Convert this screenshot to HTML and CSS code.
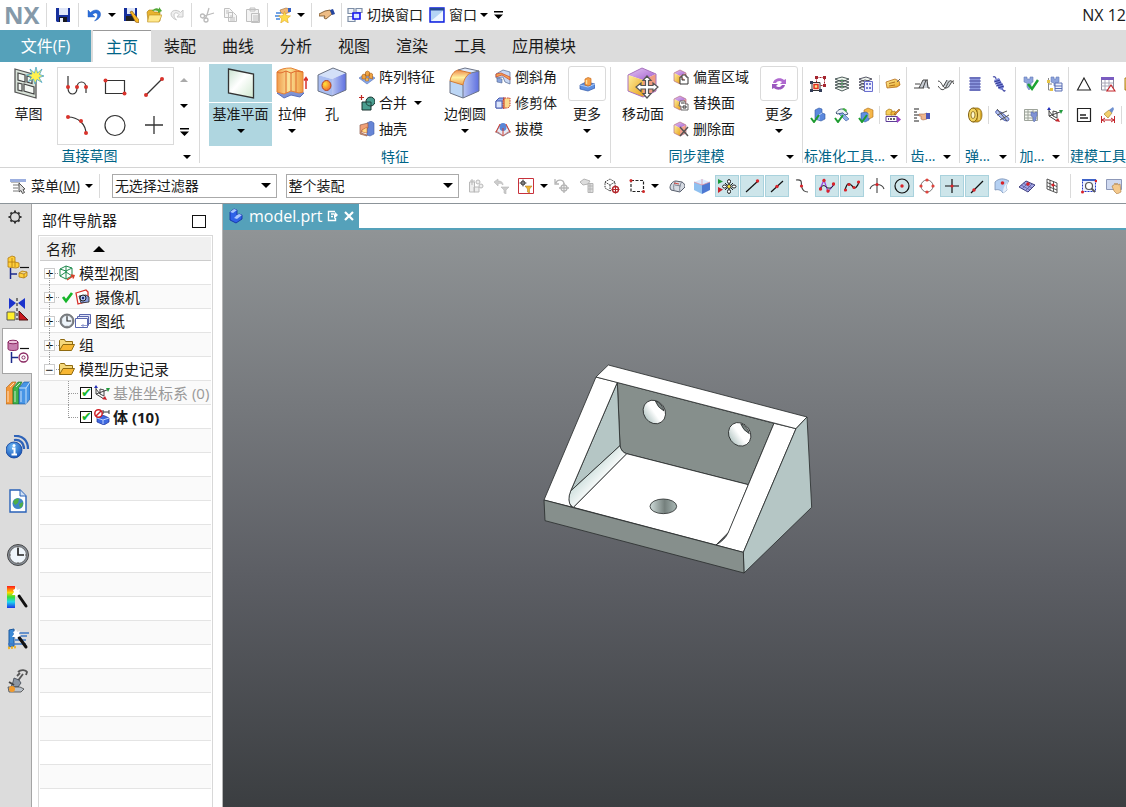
FILE: index.html
```html
<!DOCTYPE html>
<html lang="zh-CN">
  <head>
    <meta charset="UTF-8" />
    <meta name="viewport" content="width=device-width, initial-scale=1.0" />
    <title>NX 12</title>
    <link rel="stylesheet" href="styles.css">
  </head>

  <body>
    <!-- icon sprite -->
    <svg class="sprite" aria-hidden="true">
      <defs>
        <linearGradient id="gBlue" x1="0" y1="0" x2="1" y2="1"><stop offset="0" stop-color="#cfe0fb"/><stop offset="1" stop-color="#5b78d8"/></linearGradient>
        <linearGradient id="gBlueH"><stop offset="0" stop-color="#b9c6f2"/><stop offset="1" stop-color="#5d6fe0"/></linearGradient>
        <linearGradient id="gGold" x1="0" y1="0" x2="1" y2="1"><stop offset="0" stop-color="#fff0a0"/><stop offset="1" stop-color="#e8a21c"/></linearGradient>
        <linearGradient id="gOrange"><stop offset="0" stop-color="#f0994a"/><stop offset=".45" stop-color="#fbe49a"/><stop offset="1" stop-color="#ef9b3f"/></linearGradient>
        <linearGradient id="gSheet" x1="0" y1="0" x2="1" y2="1"><stop offset="0" stop-color="#c9e2cf"/><stop offset=".45" stop-color="#fff"/><stop offset="1" stop-color="#cfe8cf"/></linearGradient>
        <linearGradient id="gPurple" x1="0" y1="0" x2="1" y2="1"><stop offset="0" stop-color="#e4c6f3"/><stop offset="1" stop-color="#a45fcf"/></linearGradient>
        <linearGradient id="gFillet" x1="0" y1="0" x2="0" y2="1"><stop offset="0" stop-color="#f08a4c"/><stop offset=".5" stop-color="#fff0a0"/><stop offset="1" stop-color="#f0a050"/></linearGradient>
        <linearGradient id="gRainbow" x1="0" y1="0" x2="0" y2="1"><stop offset="0" stop-color="#ff1a1a"/><stop offset=".3" stop-color="#ffd800"/><stop offset=".5" stop-color="#35e035"/><stop offset=".72" stop-color="#20d8ee"/><stop offset="1" stop-color="#1a35e8"/></linearGradient>
        <radialGradient id="gInfo" cx=".4" cy=".3" r=".8"><stop offset="0" stop-color="#6fb8f5"/><stop offset="1" stop-color="#0b49b0"/></radialGradient>
        <radialGradient id="gHole" cx=".35" cy=".35" r=".8"><stop offset="0" stop-color="#ffe23a"/><stop offset="1" stop-color="#f2592a"/></radialGradient>
        <linearGradient id="gFace" x1="0" y1="0" x2="1" y2="1"><stop offset="0" stop-color="#9dabaa"/><stop offset=".4" stop-color="#d5e4e2"/><stop offset=".6" stop-color="#fff"/></linearGradient>
        <linearGradient id="gBore"><stop offset="0" stop-color="#cfdcda"/><stop offset=".55" stop-color="#75807d"/><stop offset="1" stop-color="#a9b8b5"/></linearGradient>
        <linearGradient id="gHoleWall"><stop offset="0" stop-color="#b8c9c7"/><stop offset=".5" stop-color="#fff"/></linearGradient>
      </defs>

      <symbol id="down" viewBox="0 0 8 4"><path d="M0 0h8L4 4z"/></symbol>
      <symbol id="up" viewBox="0 0 8 4"><path d="M0 4h8L4 0z"/></symbol>
      <symbol id="downbar" viewBox="0 0 9 8"><path d="M0 0h9v1.500H0zM0 3.500h9L4.500 8z"/></symbol>

      <!-- quick access -->
      <symbol id="save" viewBox="0 0 16 16"><path d="M1 1h14v14H2l-1-1z" fill="#16309c"/><path d="M4 1h9v7H4z" fill="#dfe6f8"/><path d="M4 10h8v5H4z" fill="#15171f"/><path d="M5 11h3v4H5z" fill="#e9edf8"/></symbol>
      <symbol id="undo" viewBox="0 0 16 16"><path d="M2 3v7h7L6.500 7.500C9 5 12 5.500 11.500 9c-.3 2-1.500 3.500-3 5 4-1.500 6.500-4 6-7.500C14 2.500 8.500 1.500 4.500 5.500z" fill="#2d6fdb" stroke="#1d55b5" stroke-width=".4"/></symbol>
      <symbol id="saveas" viewBox="0 0 16 16"><path d="M1 1h13v13H1z" fill="#16309c"/><path d="M4 1h8v6H4z" fill="#dfe6f8"/><path d="M3 9h8v5H3z" fill="#222"/><path d="M7 5l2-1 7 9-.5 3-3-1z" fill="#f8b725" stroke="#7a4c10" stroke-width=".6"/></symbol>
      <symbol id="open" viewBox="0 0 16 16"><path d="M1 5l2-2h4l1 2h6v9H2z" fill="#e8b32f" stroke="#a7790f" stroke-width=".6"/><path d="M3 8h13l-3 7H1.500z" fill="#ffe88c" stroke="#b98a19" stroke-width=".6"/><path d="M6 4c2-3 5-3.500 7-2V0l3 4-4 2V4c-2-1-4-.6-6 0z" fill="#52a838"/></symbol>
      <symbol id="redo" viewBox="0 0 16 16"><path d="M14 3v7H8l2-2.500C8 5 5 5.500 5 8c0 2 1 3.500 2.500 5C4 11.500 2 9.500 2 7c.3-4 6-5 9.500-1.500z" fill="#eee" stroke="#c8c8c8"/></symbol>
      <symbol id="cut" viewBox="0 0 16 16" fill="none" stroke="#bbb" stroke-width="1.300"><path d="M10 1L8 8 6 12M15 6L5 9"/><circle cx="3.500" cy="9" r="2"/><circle cx="7" cy="13" r="2"/></symbol>
      <symbol id="copy" viewBox="0 0 16 16" fill="#f6f6f6" stroke="#c0c0c0"><path d="M2.500 1.500h5l3 3v6h-8zM6.500 5.500h5l3 3v6h-8z"/><path d="M4 4h3M4 6h3M8 9h3M8 11h5M8 13h5"/></symbol>
      <symbol id="paste" viewBox="0 0 16 16" fill="#f3f3f3" stroke="#c0c0c0"><path d="M1.500 2.500h12v12h-12zM5 1h5v3H5zM6.500 6.500h8v9h-8z"/><path d="M8 9h5M8 11h5M8 13h5"/></symbol>
      <symbol id="starhand" viewBox="0 0 16 16"><path d="M5 3l6-2 4 1v3l-5 2-4-1z" fill="#efb677" stroke="#8a5a24" stroke-width=".5"/><path d="M13 1h3v4h-3z" fill="#3460c4"/><path d="M1 6h5M0 9h5M1 12h4" stroke="#4385dd" stroke-width="1.500"/><path d="M9.500 4.500l1.800 4 4.200.4-3.200 2.800 1 4.200-3.800-2.300L5.700 16l1-4.300L3.500 9l4.300-.4z" fill="#ffdc4a" stroke="#d99a1d" stroke-width=".5"/></symbol>
      <symbol id="hand" viewBox="0 0 16 16"><path d="M0 7l6-3 5-1 2 4-6 5-2-1 1-2-6 0z" fill="#eebd86" stroke="#6f4a20" stroke-width=".8"/><path d="M11 3l3-1 2 5-3 1z" fill="#24459f"/></symbol>
      <symbol id="switchwin" viewBox="0 0 16 16"><path d="M1 1.500h6v5H1zM9 1.500h6v4H9zM1 9.500h7v5H1z" fill="#eef2f8" stroke="#7d8ea6" stroke-width="1.200"/><path d="M6 6h7v6H6z" fill="#dbe8ff" stroke="#1414f0" stroke-width="1.600"/></symbol>
      <symbol id="window" viewBox="0 0 16 16"><path d="M1 1h14v14H1z" fill="#b4d4f5" stroke="#0d1ce0" stroke-width="1.400"/><path d="M2 14L14 4v10z" fill="#eef6ff"/><path d="M1 1h14v2.500H1z" fill="#244a94"/></symbol>

      <!-- sketch tools -->
      <symbol id="sketch" viewBox="0 0 30 32"><path d="M1 2l21 6v23L1 25z" fill="#d9e3d9" stroke="#555" stroke-width="1.300"/><path d="M4 6l7 2v7l-7-2zM4 16l4 1v7l-4-1zM10 17l10 3v7l-10-3zM13 9l5 1.500v6L13 15z" fill="#f4f8f4" stroke="#444" stroke-width="1.200"/><path d="M22 0l1.500 6L28 2l-2.500 5.500L30 9l-5 1.500 3 5-5-3L21 17l-1.500-5-5 2.500 3-4.500-5-2 5.500-1L16 2l4.500 4z" fill="#fff14f" stroke="#47a4cf" stroke-width=".8"/></symbol>
      <symbol id="profile" viewBox="0 0 24 24"><path d="M3 1v12c0 8 9 8 9 0s9-8 9 0v5" fill="none" stroke="#333" stroke-width="1.200"/><g fill="#d9332c"><circle cx="3" cy="12" r="2"/><circle cx="12" cy="12" r="2"/><circle cx="21" cy="12" r="2"/></g></symbol>
      <symbol id="rect" viewBox="0 0 24 24"><path d="M2.500 5.500h19v13h-19z" fill="none" stroke="#333" stroke-width="1.200"/><circle cx="2.500" cy="5.500" r="2" fill="#d9332c"/><circle cx="21.500" cy="18.500" r="2" fill="#d9332c"/></symbol>
      <symbol id="line" viewBox="0 0 24 24"><path d="M4 20L20 4" stroke="#333" stroke-width="1.200"/><circle cx="4" cy="20" r="2" fill="#d9332c"/><circle cx="20" cy="4" r="2" fill="#d9332c"/></symbol>
      <symbol id="arc" viewBox="0 0 24 24"><path d="M3 4c10 0 18 7 18 17" fill="none" stroke="#333" stroke-width="1.200"/><g fill="#d9332c"><circle cx="3" cy="4" r="2"/><circle cx="16" cy="8" r="2"/><circle cx="21" cy="20" r="2"/></g></symbol>
      <symbol id="circle" viewBox="0 0 24 24"><circle cx="12" cy="12.500" r="10" fill="none" stroke="#333" stroke-width="1.200"/></symbol>
      <symbol id="point" viewBox="0 0 24 24"><path d="M12 3v18M3 12h18" stroke="#333" stroke-width="1.300"/></symbol>

      <!-- features -->
      <symbol id="plane" viewBox="0 0 32 32"><path d="M3.500 2l25 5v24l-25-5z" fill="url(#gSheet)" stroke="#333" stroke-width="1.300"/></symbol>
      <symbol id="extrude" viewBox="0 0 32 32"><path d="M1 26l9-4 9 2 9 2-4 4-9-2-7 3z" fill="#7f93d5" stroke="#5870bb"/><path d="M1 5c3-3 8-4 14-4l12 4v20l-4 1-8-2-7 3-7-2z" fill="url(#gOrange)" stroke="#e58135"/><path d="M1 5c4 2 6 0 9-1l5 2 5-2 7 1M10 4v22M15 6v18M20 4v21" fill="none" stroke="#df6a2d"/><path d="M30 22V11M28 13.500l2-3 2 3" fill="none" stroke="#d8302a" stroke-width="1.500"/></symbol>
      <symbol id="hole" viewBox="0 0 32 32"><path d="M2 8L17 1l13 5-14 6z" fill="#d3e0f8"/><path d="M2 8l14 4v17L2 24z" fill="#a9bdf0"/><path d="M16 12l14-6v17l-14 6z" fill="url(#gBlueH)"/><path d="M2 8L17 1l13 5v17l-14 6L2 24z" fill="none" stroke="#6a7284"/><ellipse cx="10.500" cy="18.500" rx="4.500" ry="5" fill="url(#gHole)" stroke="#b33f21"/></symbol>
      <symbol id="pattern" viewBox="0 0 16 16"><path d="M0 9l8-5 8 5-8 6z" fill="#86a9ea" stroke="#5671b8" stroke-width=".6"/><path d="M3 10V6l2-1 2 1v4zM6.500 7V3l2-1 2 1v4zM10 9V5l2-1 1.500 1v5z" fill="#efa443" stroke="#a95e16" stroke-width=".6"/><path d="M6.500 12V9h3v3z" fill="#f5b857" stroke="#a95e16" stroke-width=".5"/></symbol>
      <symbol id="unite" viewBox="0 0 16 16"><path d="M3 7h4a4.500 4.500 0 1 1 5 4v4H3z" fill="#4a9e90" stroke="#18332f"/><path d="M7 7c0 3 2 4 5 4M12 11V7H7" fill="none" stroke="#18332f" stroke-width=".8"/><path d="M2.500 0v5M0 2.500h5" stroke="#c02822" stroke-width="1.200"/></symbol>
      <symbol id="shell" viewBox="0 0 16 16"><path d="M8 2l4-2 3 2v11l-4 2-3-1z" fill="#6685d6" stroke="#455fa8" stroke-width=".6"/><path d="M1 4l8-2v5L3 9l-1 3 6 2v1l-7-2z" fill="#f0a077" stroke="#8c5b4d" stroke-width=".7"/><path d="M3 9l5-3v6L3 11z" fill="#ffd98a" stroke="#c05e32" stroke-width=".6"/></symbol>
      <symbol id="blend" viewBox="0 0 32 32"><path d="M1 14l13 4v13L1 26z" fill="#bcd6f5"/><path d="M14 18c1-6 4-12 8-13l8-1v20l-16 7z" fill="url(#gBlueH)"/><path d="M9 3l7-2 14 3-8 2z" fill="#dce8fb"/><path d="M9 3l13 3c-4 1-7 6-8 12L1 14C2 8 5 4 9 3z" fill="url(#gFillet)" stroke="#d37a32"/><path d="M9 3l7-2 14 3v20l-16 7L1 26V14M14 18v13M22 6l8-2" fill="none" stroke="#6b7387"/></symbol>
      <symbol id="chamfer" viewBox="0 0 16 16"><path d="M1 5l7-4 7 2v12l-5-2-2-5-7 1z" fill="#c9d9f4" stroke="#51658f" stroke-width=".7"/><path d="M1 5l5-1 9 4v3L7 6 1 8z" fill="#f0a654" stroke="#d03f25" stroke-width=".7"/><path d="M2 9l5 1v4l-5-1z" fill="#8aa5de" stroke="#51658f" stroke-width=".6"/></symbol>
      <symbol id="trim" viewBox="0 0 16 16"><path d="M1 6l3-3h5v10H1z" fill="#8ea8e8" stroke="#4a5cb0"/><path d="M1 6h6v7H1z" fill="#dbe5fb" stroke="#4a5cb0"/><path d="M8 5l2-2h5v8l-2 2H8z" fill="#fbd98b" stroke="#c3392b" stroke-dasharray="1.500 1"/><path d="M9 2v12" stroke="#c3392b"/></symbol>
      <symbol id="draft" viewBox="0 0 16 16"><path d="M5 4h6l4 7-7 4-7-4z" fill="#e3ecf8" stroke="#50607f" stroke-width=".7"/><ellipse cx="8" cy="6" rx="3.500" ry="4" fill="#5a86d6"/><path d="M5 3L1 11M8 7v8M11 3l4 8" stroke="#d33a2c" fill="none"/><path d="M0 11h3l5 4 5-4h3" stroke="#cc5b4d" fill="none" stroke-width=".8"/></symbol>
      <symbol id="morefeat" viewBox="0 0 16 16"><path d="M1 9l6-3 9 2v4l-7 3-8-2z" fill="#5e8fe0" stroke="#3159a8" stroke-width=".7"/><path d="M1 9l8 2 7-3" stroke="#aecbf7" fill="none"/><path d="M6 3l3-1.500 3 1V9L9 10 6 9z" fill="#f7a24a" stroke="#c56a1d" stroke-width=".7"/><path d="M7.500 4v4" stroke="#ffe2a0" stroke-width="1.500"/></symbol>

      <!-- synchronous modelling -->
      <symbol id="movecube" viewBox="0 0 32 32"><path d="M1 8L15 1l14 6-13 6z" fill="url(#gPurple)"/><path d="M1 8l15 5v17L1 24z" fill="url(#gGold)"/><path d="M16 13l13-6v17l-13 6z" fill="#ef9c80"/><path d="M1 8L15 1l14 6v17l-13 6L1 24z" fill="none" stroke="#a872be"/><path d="M20 9l4 4.500h-2.500v5H26V16l5 4-5 4.500V22h-4.500v4.500H24L20 31l-4-4.500h2.500V22H14v2.500L9 20l5-4v2.500h4.500v-5H16z" fill="#fff" stroke="#555" stroke-width="1.200"/></symbol>
      <symbol id="cube" viewBox="0 0 16 16"><path d="M1 4l6-3 6 3-6 3z" fill="url(#gPurple)"/><path d="M1 4l6 3v8l-6-3z" fill="url(#gGold)"/><path d="M7 7l6-3v8l-6 3z" fill="#f2a08e"/><path d="M1 4l6-3 6 3v8l-6 3-6-3z" fill="none" stroke="#b46f88" stroke-width=".7"/></symbol>
      <symbol id="offset" viewBox="0 0 16 16"><use href="#cube"/><path d="M7 8h2V6h4v2h2v7H7zM9 8v3h3" fill="#fff" stroke="#333"/></symbol>
      <symbol id="replace" viewBox="0 0 16 16"><use href="#cube"/><path d="M7 6h5v3h3v6H8v-4H6z" fill="#fff" stroke="#666"/><path d="M8 8h3M10 11h3v2h-3z" stroke="#333" fill="none"/></symbol>
      <symbol id="delface" viewBox="0 0 16 16"><use href="#cube"/><path d="M7 6l8 9M15 6l-8 9" stroke="#555" stroke-width="1.500"/></symbol>
      <symbol id="sync" viewBox="0 0 16 16"><path d="M2 7c1-5 8-6 11-3l2-1v5H9l2-2c-2-2-5-1-6 1z" fill="#b06ad0"/><path d="M14 9c-1 5-8 6-11 3l-2 1V8h6l-2 2c2 2 5 1 6-1z" fill="#9b58bf"/></symbol>

      <!-- tool groups -->
      <symbol id="attr" viewBox="0 0 16 16"><path d="M6.500 1.500h8v8h-8z" fill="none" stroke="#a5252f" stroke-dasharray="2 1"/><path d="M2 6.500h8v8H2z" fill="#fff" stroke="#333"/><path d="M4 8.500h4v4H4z" fill="#ffe08a" stroke="#e0301f" stroke-width="1.500"/><path d="M5 0h3v3H5zM13 0h3v3h-3zM13 8h3v3h-3z" fill="#a5252f"/><path d="M0 5h3v3H0zM0 13h3v3H0zM9 13h3v3H9z" fill="#333c58"/></symbol>
      <symbol id="layers" viewBox="0 0 16 16" fill="#eef7ee" stroke="#3c4a4a" stroke-width=".9"><path d="M1 12l7-2 7 2-7 3zM1 9l7-2 7 2-7 3zM1 6l7-2 7 2-7 3zM1 3l7-2 7 2-7 3z"/><path d="M8 4v1M8 7v1M8 10v1" stroke="#36a04a" stroke-width="1.500"/></symbol>
      <symbol id="layerlist" viewBox="0 0 16 16"><path d="M1 12l6-2 7 2-7 3zM1 9l6-2 7 2-7 3zM1 6l6-2 7 2-7 3zM1 3l7-2 6 2-7 3z" fill="#eef3ee" stroke="#445" stroke-width=".9"/><path d="M6.500 5.500h8v10h-8z" fill="#eef0ff" stroke="#6a6fd0"/><path d="M8 8h2M11 8h2M8 12h2M11 12h2" stroke="#4e55c4" stroke-width="1.500"/></symbol>
      <symbol id="tag" viewBox="0 0 16 16"><path d="M1 6l9-3 4 2 1 4-3 2-10 1z" fill="url(#gGold)" stroke="#b56d1c" stroke-width=".8"/><path d="M4 7.500l6-1.500M4 10l6-1" stroke="#9a5c12" stroke-width=".8"/><path d="M12 6l3-3" stroke="#666"/></symbol>
      <symbol id="partcheck" viewBox="0 0 16 16"><path d="M5 3l4-2 3 1v4l3 1v5l-4 2-6-2z" fill="#5b88dd" stroke="#31589f" stroke-width=".6"/><path d="M12 6l-3 2v5" stroke="#b9d2f7" fill="none"/><path d="M1 11l3 4 5-7" stroke="#1e9c30" stroke-width="2" fill="none"/></symbol>
      <symbol id="lampcheck" viewBox="0 0 16 16"><path d="M2 6c2-4 6-5 9-3l3 4-3 1-2-2-6 1z" fill="#e8eef5" stroke="#445a78"/><path d="M5 7l7 7 3-2-6-6z" fill="#8fb1e8" stroke="#3558a0" stroke-width=".6"/><path d="M8 2l4 3 1-2-3-2z" fill="#3fae42"/><path d="M1 11l3 4 5-7" stroke="#1e9c30" stroke-width="2" fill="none"/></symbol>
      <symbol id="asmcheck" viewBox="0 0 16 16"><path d="M6 3l4-2 5 2v7l-4 2-5-2z" fill="#f5b648" stroke="#a86a17" stroke-width=".6"/><path d="M3 6l5-1 3 2v6l-4 2-4-2z" fill="#5f90e2" stroke="#31589f" stroke-width=".6"/><path d="M11 5v6" stroke="#fbe1a0"/><path d="M1 11l3 4 5-7" stroke="#1e9c30" stroke-width="2" fill="none"/></symbol>
      <symbol id="export" viewBox="0 0 16 16"><path d="M1 4l3-2 3 1v5H1z" fill="#f7cf5a" stroke="#a8761a" stroke-width=".7"/><path d="M6 5l4-1 1 4H6z" fill="#f3bb3c" stroke="#a8761a" stroke-width=".7"/><path d="M9 7l5-5 1 1-5 5z" fill="#e98c2c" stroke="#7b4b17" stroke-width=".5"/><path d="M1 9.500h11v5H1z" fill="#fff" stroke="#5c3d96"/><path d="M3 12h1M5 12h2M8 12h2" stroke="#333" stroke-width="1.500"/><path d="M12 9l4 3.500-4 3.500z" fill="#9a3fc4"/></symbol>
      <symbol id="gearpair" viewBox="0 0 16 16" fill="none" stroke="#444"><path d="M5 12L9 4h4l2 8z" fill="#c8cdd4" stroke="none"/><path d="M0 12h5l4-8h5M1 8h5M9 12l3-8M5 12h5M13 4l1 8h2"/></symbol>
      <symbol id="gearmesh" viewBox="0 0 16 16" fill="none" stroke="#444"><path d="M5 10l4-6 5 1-3 7z" fill="#cbd1d6" stroke="none"/><path d="M0 10c4 6 7 4 9-1s4-6 7-1M0 5c4 0 4 7 8 7s5-8 8-7M9 4L5 11"/></symbol>
      <symbol id="rackhand" viewBox="0 0 16 16"><path d="M0 2h5M0 5h3M0 8h5M0 11h3M0 14h5" stroke="#222" stroke-width="1.200"/><path d="M5 7h5l3-1v6l-4 1-2-1V9H5z" fill="#f0b78d" stroke="#a76b4d" stroke-width=".6"/><path d="M12 6h4v6h-4z" fill="#4c56b8"/></symbol>
      <symbol id="spring" viewBox="0 0 16 16"><path d="M3 2h10M3 5h10M3 8h10M3 11h10M3 14h10" stroke="#3b43a8" stroke-width="1.500" stroke-linecap="round"/><path d="M3 3.500h10M3 6.500h10M3 9.500h10M3 12.500h10" stroke="#8d98e0" stroke-width="1.200"/></symbol>
      <symbol id="tension" viewBox="0 0 16 16"><path d="M2 1c2-1 3 1 3 2M11 12c1 3 3 4 3 2" fill="none" stroke="#4950a8" stroke-width="1.200"/><path d="M3 4l5-2 5 9-2 3-3-1z" fill="#7580d4"/><path d="M3 6l6-2M4 8l6-2M5 10l7-2M7 12l6-2" stroke="#353c98" stroke-width="1"/></symbol>
      <symbol id="coil" viewBox="0 0 16 16"><path d="M6 1h5c3 1 4 4 4 7s-1 6-4 7H6z" fill="#d9ab2c" stroke="#806012" stroke-width=".7"/><ellipse cx="6" cy="8" rx="4.500" ry="7" fill="#f3d461" stroke="#806012"/><ellipse cx="6" cy="8" rx="2" ry="3.500" fill="#fff7c9" stroke="#806012" stroke-width=".8"/><path d="M12 3v10" stroke="#fff0a0"/></symbol>
      <symbol id="springcut" viewBox="0 0 16 16"><path d="M2 4c2-2 3 1 5 1l6 5c2 0 3 4 0 4s-6-3-8-5-4-3-3-5z" fill="#aebdf0" stroke="#4757a8"/><path d="M3 2l10 12M13 4L3 8M15 8L6 13" stroke="#555"/></symbol>
      <symbol id="mcheck" viewBox="0 0 16 16"><path d="M1 1h3v2h3V1h3v5l-2 1v4l-2 3-2-3V7L1 6z" fill="#8ea4dc" stroke="#6178b8" stroke-width=".6"/><path d="M5 8l4 5 6-9" stroke="#1da332" stroke-width="2.500" fill="none"/></symbol>
      <symbol id="mtree" viewBox="0 0 16 16"><path d="M4 1h3v2h2V1h3v5l-2 1v3H7V7L4 6z" fill="#8ea4dc" stroke="#6178b8" stroke-width=".6"/><path d="M1.500 2v12H5M1.500 8H5" stroke="#888" fill="none"/><path d="M8 7h7v8H8z" fill="#eef1fb" stroke="#5c70b4"/><path d="M8 10h7M8 12.500h7" stroke="#5c70b4"/><path d="M0 4h3v3H0zM3 12h3v3H3z" fill="#e6c445"/></symbol>
      <symbol id="mtable" viewBox="0 0 16 16"><path d="M1.500 2.500h13v11h-13zM1.500 5h13M1.500 8h13M1.500 11h13M5 2v11M10 2v11" fill="#f4f7f0" stroke="#9da39a"/><path d="M8 5h2v1h2V5h2v4l-1 1v3l-2 2-1-2v-3L8 9z" fill="#8093d5" stroke="#5468aa" stroke-width=".5"/></symbol>
      <symbol id="csys" viewBox="0 0 16 16"><path d="M2 2v7l8 5M2 9l11-4M6 4l4 1v6L6 9zM2 4l4 5" fill="none" stroke="#444"/><path d="M12 3l4 0-2 4z" fill="#239a3e"/><path d="M8 14l5 1-2-4z" fill="#c6262c"/><path d="M0 3l2-3 2 3z" fill="#2430b8"/></symbol>
      <symbol id="triangle" viewBox="0 0 16 16"><path d="M8 2l6.500 12h-13z" fill="none" stroke="#222" stroke-width="1.100"/></symbol>
      <symbol id="tabletri" viewBox="0 0 16 16"><path d="M1.500 2v12h12V2z" fill="#fff" stroke="#8b8b9a"/><path d="M1 1h13v3H1z" fill="#7a5cc0"/><path d="M1 7h12M1 10h12M5 4v10M9 4v10" stroke="#a9a9b8"/><path d="M11 9l4 6H7z" fill="#fff" stroke="#c3262c" stroke-width="1.200"/></symbol>
      <symbol id="goldbox" viewBox="0 0 16 16"><path d="M1 2h14v12H1z" fill="url(#gGold)" stroke="#a87817"/></symbol>
      <symbol id="note" viewBox="0 0 16 16"><path d="M1.500 1.500h13v13h-13z" fill="#fff" stroke="#222" stroke-width="1.200"/><path d="M4 8h6M4 11h8" stroke="#222" stroke-width="1.300"/></symbol>
      <symbol id="dimbrush" viewBox="0 0 16 16"><path d="M4 7l5-4 3 3-4 5z" fill="#f3cf6c" stroke="#9a7a26" stroke-width=".6"/><path d="M9 3l4-3 1 2-2 4z" fill="#6e90cf"/><path d="M1.500 9v7M14.500 9v7M2 13h12M5 11l-3 2 3 2M11 11l3 2-3 2" fill="none" stroke="#c3262c"/></symbol>

      <!-- selection bar -->
      <symbol id="menu" viewBox="0 0 16 16"><path d="M1 4h9M3 7h7M3 10h5M3 13h5" stroke="#777"/><path d="M0 1h16v3H0z" fill="#9cafdf"/><path d="M9 5l6 6-2 .5 1.500 3-2 1-1.500-3L9 14z" fill="#ddd" stroke="#444" stroke-width=".9"/></symbol>
      <symbol id="selasm" viewBox="0 0 16 16" fill="#eee" stroke="#b9b9b9"><path d="M1.500 4h5v10h-5zM4 1v6M2 3h5M6 9h5v5H6z"/><circle cx="10" cy="4" r="2"/><circle cx="13" cy="8" r="2"/></symbol>
      <symbol id="resetfilter" viewBox="0 0 16 16" fill="#ccc" stroke="#b5b5b5" stroke-width=".6"><path d="M1 4l4-3v2c4 0 5 2 5 4-2-2-3-2-5-1v2zM8 9h8l-3 3v4l-2-1v-3z"/></symbol>
      <symbol id="filter" viewBox="0 0 16 16"><path d="M.5.5h15v15H.5z" fill="#fff" stroke="#c8323c"/><circle cx="5" cy="5" r="2" fill="none" stroke="#333"/><path d="M5 1.500v7M1.500 5h7" stroke="#333" stroke-width=".8"/><path d="M7 8h7l-2.500 3v4L9.500 14v-3z" fill="#f0b632" stroke="#a4731a" stroke-width=".5"/></symbol>
      <symbol id="targetundo" viewBox="0 0 16 16" fill="none" stroke="#b5b5b5" stroke-width="1.300"><path d="M2 5c1-4 8-4 8 1M1 1v5h4"/><circle cx="10" cy="10" r="3"/><path d="M10 5v10M5 10h10"/></symbol>
      <symbol id="seltree" viewBox="0 0 16 16" fill="#ddd" stroke="#b5b5b5"><path d="M1 4l4-3 6 2-2 3-5 1zM9 5.500h5v9H9zM9 8h5M9 11h5M11 5v9"/></symbol>
      <symbol id="cubetarget" viewBox="0 0 16 16" fill="none"><path d="M1 4l5-3 5 3v6l-5 3-5-3zM1 4l5 3 5-3M6 7v6" stroke="#333" stroke-dasharray="1.500 1"/><circle cx="11.500" cy="11.500" r="3" fill="#fff" stroke="#b3262b" stroke-width="1.400"/><path d="M11.500 7.500v8M7.500 11.500h8" stroke="#b3262b"/></symbol>
      <symbol id="selrect" viewBox="0 0 16 16"><path d="M2 2.500h12.500v11H2z" fill="none" stroke="#222" stroke-width="1.200" stroke-dasharray="3 1.500"/><circle cx="2" cy="2.500" r="1.500" fill="#d02a2a"/><circle cx="14.500" cy="13.500" r="1.500" fill="#d02a2a"/></symbol>
      <symbol id="graybody" viewBox="0 0 16 16"><path d="M1 10c0-4 3-7 6-7l6 1c2 1 3 3 3 5l-5 5-9-2z" fill="#d6dbe3" stroke="#555c6a"/><path d="M7 3c-2 2-3 6-2 9M13 4c-2 2-3 5-2 10M6 7l6 1" fill="none" stroke="#7d8492"/><path d="M5 5l5 1" stroke="#d04b45"/></symbol>
      <symbol id="bluecube" viewBox="0 0 16 16"><path d="M0 4l8-3 8 3-8 3z" fill="#dbeaff"/><path d="M0 4l8 3v9l-8-4z" fill="#8fc0f0"/><path d="M8 7l8-3v8l-8 4z" fill="#4d78d2"/><path d="M8 1v6M0 4l8 3 8-3" stroke="#e08a9a" fill="none" stroke-width=".7"/></symbol>
      <symbol id="snapall" viewBox="0 0 20 16"><path d="M1 1l5 2.500L1 6z" fill="#1c9a38"/><path d="M1 9l5 2.500L1 15z" fill="#c8232a"/><circle cx="12" cy="8.500" r="2" fill="#ffe23a" stroke="#333"/><g fill="#fff" stroke="#222"><ellipse cx="12" cy="3.500" rx="1.500" ry="2"/><ellipse cx="12" cy="13.500" rx="1.500" ry="2"/><ellipse cx="17" cy="8.500" rx="2" ry="1.500"/><ellipse cx="7.500" cy="8.500" rx="2" ry="1.500"/></g><path d="M8 5l2 2M16 5l-2 2M8 12l2-2M16 12l-2-2" stroke="#222"/></symbol>
      <symbol id="endpt" viewBox="0 0 16 16"><path d="M2 14L14 3" stroke="#111" stroke-width="1.200"/><circle cx="13.500" cy="3" r="1.700" fill="#d8232a"/></symbol>
      <symbol id="midpt" viewBox="0 0 16 16"><path d="M2 14L14 3" stroke="#111" stroke-width="1.200"/><circle cx="8" cy="8.500" r="1.700" fill="#d8232a"/></symbol>
      <symbol id="ctrlpt" viewBox="0 0 16 16"><path d="M2 2c7-1 5 3 5.500 6S9 14 14 14" fill="none" stroke="#444" stroke-width="1.200"/><circle cx="7.500" cy="8" r="1.600" fill="#d8232a"/></symbol>
      <symbol id="pole" viewBox="0 0 16 16"><path d="M1 11L5 2l4 12 6-8" fill="none" stroke="#9a3fe0" stroke-width="1.200"/><path d="M1 11c4-7 6-1 8-1s4 1 6-4" fill="none" stroke="#111"/><g fill="#d8232a"><circle cx="1.500" cy="11" r="1.700"/><circle cx="5" cy="2.500" r="1.700"/><circle cx="9" cy="13" r="1.700"/><circle cx="14.500" cy="6" r="1.700"/></g></symbol>
      <symbol id="spline" viewBox="0 0 16 16"><path d="M1 12C4 1 7 7 9 9s5 0 6-6" fill="none" stroke="#111" stroke-width="1.200"/><g fill="#d8232a"><circle cx="1.500" cy="12" r="1.600"/><circle cx="5" cy="6.500" r="1.600"/><circle cx="10" cy="9.500" r="1.600"/><circle cx="14.500" cy="4" r="1.600"/></g></symbol>
      <symbol id="intersect" viewBox="0 0 16 16"><path d="M8 0v15M1 11c2-6 12-6 14 0" fill="none" stroke="#444" stroke-width="1.100"/><circle cx="8" cy="6.500" r="1.600" fill="#d8232a"/></symbol>
      <symbol id="center" viewBox="0 0 16 16"><circle cx="8" cy="8" r="7" fill="none" stroke="#111" stroke-width="1.200"/><circle cx="8" cy="8" r="1.700" fill="#d8232a"/></symbol>
      <symbol id="quadrant" viewBox="0 0 16 16"><circle cx="8" cy="8" r="6" fill="none" stroke="#777"/><g fill="#e0443e"><circle cx="8" cy="2" r="1.600"/><circle cx="8" cy="14" r="1.600"/><circle cx="2" cy="8" r="1.600"/><circle cx="14" cy="8" r="1.600"/></g></symbol>
      <symbol id="existing" viewBox="0 0 16 16"><path d="M8 1v14M1 8h14" stroke="#111" stroke-width="1.200"/><circle cx="8" cy="8" r="1.600" fill="#d8232a"/></symbol>
      <symbol id="oncurve" viewBox="0 0 16 16"><path d="M2 15L14 3" stroke="#111" stroke-width="1.200"/><circle cx="5" cy="12" r="1.700" fill="#d8232a"/></symbol>
      <symbol id="onface" viewBox="0 0 16 16"><path d="M1 4c4-4 9-4 14-1-3 3-3 6-2 9l-4 3c-2-3-5-4-8-3z" fill="#b5d0f2" stroke="#7891b5" stroke-width=".8"/><path d="M15 3c-3 3-3 6-2 9l-4 3c0-4 1-8 6-12z" fill="#e6f0fc"/><circle cx="8.500" cy="5" r="1.800" fill="#d8232a"/></symbol>
      <symbol id="facetpt" viewBox="0 0 16 16"><path d="M0 9l7-6 9 4-7 7z" fill="#a3a5e5" stroke="#40407e"/><path d="M2 7l9 5M4 5l9 5M3 11l7-7M6 13l7-7" stroke="#5a5a9a" stroke-width=".8"/><circle cx="9" cy="6" r="1.800" fill="#d8232a"/></symbol>
      <symbol id="gridpt" viewBox="0 0 16 16"><path d="M3 1l10 4v10L3 11zM3 4.500l10 4M3 8l10 4M6 2v10M9.500 3.500v10" fill="none" stroke="#444" stroke-width=".9"/><circle cx="9" cy="7" r="1.600" fill="#d8232a"/></symbol>
      <symbol id="zoomwin" viewBox="0 0 16 16"><path d="M1.500 2.500h13v11h-13z" fill="#eef2ff" stroke="#2336c4" stroke-dasharray="2 1"/><path d="M1 1h14v2H1z" fill="#3e63c8"/><circle cx="8" cy="8" r="3.500" fill="#fff" stroke="#555" stroke-width="1.200"/><path d="M10.500 10.500L14 14" stroke="#555" stroke-width="1.800"/><circle cx="1.500" cy="14" r="1.500" fill="#d8232a"/><circle cx="15" cy="3" r="1.300" fill="#d8232a"/></symbol>
      <symbol id="pan" viewBox="0 0 16 16"><path d="M.5 1.500h15v10H.5z" fill="#cfd9f0" stroke="#8d98b8"/><path d="M6 8l2-1 1-2 1 2 1-2 1 2 2-1 1 8-4 2-3-3z" fill="#f4c98c" stroke="#a9783c" stroke-width=".6"/></symbol>

      <!-- resource bar -->
      <symbol id="gear" viewBox="0 0 16 16"><circle cx="8" cy="8" r="4.500" fill="none" stroke="#333" stroke-width="1.300"/><path d="M8 1.500v2M8 12.500v2M1.500 8h2M12.500 8h2M3.500 3.500L5 5M12.500 3.500L11 5M3.500 12.500L5 11M12.500 12.500L11 11" stroke="#333" stroke-width="2"/></symbol>
      <symbol id="asmnav" viewBox="0 0 24 24"><path d="M2 3l4-2 3 1v5l4 1v4l-3 1-8-1z" fill="#ffcf3a" stroke="#b07a10" stroke-width=".8"/><path d="M2 7h7v5M6 3v9" stroke="#b07a10" fill="none" stroke-width=".8"/><path d="M4.500 13v11M4.500 19H11" stroke="#1c2a8c" stroke-width="1.500" fill="none"/><path d="M14 12.500h9" stroke="#111" stroke-width="1.200"/><path d="M13 18l3-2 5 1v4l-3 2-5-1zM13 18l5 1 3-2M18 19v4" fill="#ffcf3a" stroke="#b07a10" stroke-width=".8"/></symbol>
      <symbol id="constraint" viewBox="0 0 24 24"><path d="M3 1l7 5-7 6zM19 1l-7 5 7 6z" fill="#1b33cc"/><path d="M11 1v22" stroke="#111" stroke-dasharray="3 2"/><path d="M1 15h8v8H1z" fill="#fff02a" stroke="#555"/><path d="M13 14l9 9h-9z" fill="#c8191f" stroke="#501010"/></symbol>
      <symbol id="partnav" viewBox="0 0 24 24"><path d="M1 3v7c0 2 10 2 10 0V3z" fill="#c77fae" stroke="#8a2862"/><ellipse cx="6" cy="3" rx="5" ry="1.800" fill="#eac4dc" stroke="#8a2862"/><path d="M4.500 13v11M4.500 18.500H11" stroke="#1c2a8c" stroke-width="1.500" fill="none"/><path d="M13 9.500h9" stroke="#111" stroke-width="1.200"/><circle cx="16.500" cy="18.500" r="4.500" fill="none" stroke="#8a2862" stroke-width="1.300"/><circle cx="16.500" cy="18.500" r="1.600" fill="none" stroke="#8a2862"/></symbol>
      <symbol id="books" viewBox="0 0 24 24"><path d="M0 7l6-6h4L7 7v16H0z" fill="#f3983a" stroke="#a8601a" stroke-width=".6"/><path d="M7 7l5-6h4l-3 6v16H7z" fill="#3fb34a" stroke="#1c6a26" stroke-width=".6"/><path d="M13 7l5-6h6v17l-4 5h-7z" fill="#4795e6" stroke="#154f94" stroke-width=".6"/><path d="M20 7v16M20 7l4-6M13 7h7" stroke="#c7e2fa" fill="none"/><path d="M2 10v11M9 10v11M15 10v11M4 6l4-4M10 6l4-4" stroke="#fff" stroke-opacity=".7"/></symbol>
      <symbol id="info" viewBox="0 0 24 24"><path d="M8 5c6-1 10 3 10 9M8 1c9-1 14 5 14 13" fill="none" stroke="#2f63b8" stroke-width="2.200"/><circle cx="8" cy="15" r="8" fill="url(#gInfo)" stroke="#12419a" stroke-width=".8"/><circle cx="8" cy="10.500" r="1.500" fill="#fff"/><path d="M6 13.500h2.500V19M5.500 19.500h5.500" stroke="#fff" stroke-width="2" fill="none"/></symbol>
      <symbol id="web" viewBox="0 0 24 24"><path d="M4 1h10l6 6v16H4z" fill="#fff" stroke="#2a62b8" stroke-width="1.400"/><path d="M14 1v6h6" fill="#cfe0f5" stroke="#2a62b8"/><circle cx="12" cy="14.500" r="5.500" fill="#3f86c6"/><path d="M7 13c2-4 5-4 6-3l-1 4-3 2zM13 15l4-2c0 4-1 5-3 6z" fill="#4fae46"/></symbol>
      <symbol id="clock" viewBox="0 0 24 24"><circle cx="12" cy="12" r="10.500" fill="#8a929c" stroke="#444"/><circle cx="12" cy="12" r="8.500" fill="#eef5fb" stroke="#666"/><path d="M12 5v7h6" fill="none" stroke="#222" stroke-width="1.700"/><path d="M12 4v1M12 19v1M4 12h1M19 12h1" stroke="#555"/></symbol>
      <symbol id="rainbow" viewBox="0 0 24 24"><path d="M1 1h8v22H1z" fill="url(#gRainbow)"/><path d="M11 8l9 13" stroke="#111" stroke-width="3" stroke-linecap="round"/><path d="M10 2l1 3 3-1-1 3 2 2-3 1-1 2-2-2-3 0 2-3-1-2 2-1z" fill="#fff"/></symbol>
      <symbol id="visual" viewBox="0 0 24 24"><path d="M3 3l5-1v17l-5 1z" fill="#3c8ad6" stroke="#1f5a9e"/><path d="M10 6h13M10 9h11M9 13h11M2 17h18" stroke="#3f78c4" stroke-width="1.400"/><path d="M2 21l9-1" stroke="#f0b52c" stroke-width="2.500" stroke-dasharray="2 1"/><path d="M12 9l8 11" stroke="#111" stroke-width="3" stroke-linecap="round"/><path d="M10 2l1 3 3-1-1 3 2 2-3 1-1 2-2-2-3 0 2-3-1-2 2-1z" fill="#fff"/></symbol>
      <symbol id="robot" viewBox="0 0 24 24"><path d="M12 3c3-3 8-2 9 0l-1 3M14 4l-3 3M17 5l-6 8" fill="none" stroke="#555" stroke-width="1.800"/><path d="M8 9l5 2 2 3-3 4-7 0 2-5z" fill="#8c96a3" stroke="#3c434d" stroke-width=".8"/><path d="M2 18h12l4 2-3 3H3z" fill="#b9c0c8" stroke="#444" stroke-width=".8"/><circle cx="6" cy="20" r="3" fill="#f29a2c"/><path d="M3 13l5 3" stroke="#444" stroke-width="2"/></symbol>

      <!-- navigator tree -->
      <symbol id="views" viewBox="0 0 16 16"><path d="M1 4l6-3 6 2v8l-6 3-6-3zM1 4l6 2 6-3M7 6v8M1 11l6-4 6 4M7 1v6" fill="none" stroke="#1f8a4d"/><path d="M8 15l6-4M12 10l3 .5-1 3" stroke="#d8402a" stroke-width="1.500" fill="none"/></symbol>
      <symbol id="tick" viewBox="0 0 16 16"><path d="M4 8l3 4 6-8" fill="none" stroke="#16b52a" stroke-width="2.700"/></symbol>
      <symbol id="camera" viewBox="0 0 16 16"><path d="M1 4l10-3 2 2v9L3 15z" fill="#fff" stroke="#d8302a" stroke-width="1.300"/><path d="M4 7l7-1 3 2v5l-8 1z" fill="#8da0e0" stroke="#222" stroke-width=".8"/><circle cx="8" cy="9" r="3" fill="#b8c8f4" stroke="#222"/><circle cx="8" cy="9" r="1.200" fill="#1b2b78"/></symbol>
      <symbol id="sheets" viewBox="0 0 16 16"><path d="M4.500 1.500h11v9h-11z" fill="#dfe3f8" stroke="#5a67ae"/><path d="M2.500 3.500h11v9h-11z" fill="#eef0fc" stroke="#5a67ae"/><path d="M.5 5.500h12v9H.5z" fill="#fff" stroke="#5a67ae"/><path d="M6 12.500h6.500M8 11v3" stroke="#8f99cf"/></symbol>
      <symbol id="folder" viewBox="0 0 16 16"><path d="M.5 13.500v-10l1-1h4l1 2h7v3" fill="#f5d87b" stroke="#8f6a10"/><path d="M.5 13.500L4 7.500h11.500l-3 6z" fill="#f7b733" stroke="#8f6a10"/></symbol>
      <symbol id="body" viewBox="0 0 16 16"><path d="M3 8l5-2 3 1 4 2v4l-5 3-7-3z" fill="#3f6ae0" stroke="#1c2f98" stroke-width=".7"/><path d="M3 9l6 2 6-2M9 11v4" stroke="#bcd0ff" fill="none"/><path d="M9 3h6M9 1v4M15 1v4" stroke="#333"/><circle cx="4.500" cy="4.500" r="3.700" fill="#fff" stroke="#cf1f26" stroke-width="1.500"/><path d="M2 7l5-5" stroke="#cf1f26" stroke-width="1.500"/></symbol>
      <symbol id="part" viewBox="0 0 16 16"><path d="M2 4l4-3 3 1v5l2-1 3 1v4l-6 4-6-3z" fill="#2f62e8" stroke="#0f2aa0" stroke-width=".8"/><path d="M6 1l3 1-4 3-3-1zM9 7l2-1 3 1-5 4-3-1z" fill="#a9c6ff"/></symbol>
      <symbol id="modified" viewBox="0 0 12 12"><path d="M8 1.500H1.500v9h7V8M4 4h3M4 6.500h2" fill="none" stroke="#fff" stroke-width="1.400"/><path d="M8 2l3 3-4 4V5z" fill="#fff"/></symbol>
      <symbol id="close" viewBox="0 0 10 10"><path d="M1 1l8 8M9 1L1 9" stroke="#fff" stroke-width="2.200"/></symbol>
    </svg>

    <header class="titlebar">
      <span class="logo">NX</span>
      <span class="sep"></span>
      <button class="tb tb-wide" aria-label="保存"><svg class="i16"><use href="#save"/></svg></button>
      <span class="sep"></span>
      <button class="tb" aria-label="撤销"><svg class="i16"><use href="#undo"/></svg></button>
      <button class="drop" aria-label="撤销列表"><svg class="arrow"><use href="#down"/></svg></button>
      <button class="tb" aria-label="另存为"><svg class="i16"><use href="#saveas"/></svg></button>
      <button class="tb" aria-label="打开"><svg class="i16"><use href="#open"/></svg></button>
      <button class="tb" aria-label="重做"><svg class="i16"><use href="#redo"/></svg></button>
      <span class="sep"></span>
      <button class="tb" aria-label="剪切"><svg class="i16"><use href="#cut"/></svg></button>
      <button class="tb" aria-label="复制"><svg class="i16"><use href="#copy"/></svg></button>
      <button class="tb" aria-label="粘贴"><svg class="i16"><use href="#paste"/></svg></button>
      <span class="sep"></span>
      <button class="tb" aria-label="重复命令"><svg class="i16"><use href="#starhand"/></svg></button>
      <button class="drop" aria-label="重复命令列表"><svg class="arrow"><use href="#down"/></svg></button>
      <span class="sep"></span>
      <button class="tb" aria-label="触控模式"><svg class="i16"><use href="#hand"/></svg></button>
      <span class="sep"></span>
      <button class="tb-text"><svg class="i16"><use href="#switchwin"/></svg>切换窗口</button>
      <button class="tb-text"><svg class="i16"><use href="#window"/></svg>窗口</button>
      <button class="drop" aria-label="窗口列表"><svg class="arrow"><use href="#down"/></svg></button>
      <button class="drop" aria-label="自定义工具条"><svg class="arrowbar"><use href="#downbar"/></svg></button>
      <span class="app-name">NX 12</span>
    </header>

    <nav class="tabs">
      <button class="file-tab">文件(F)</button>
      <a class="tab active" href="#">主页</a>
      <a class="tab" href="#">装配</a>
      <a class="tab" href="#">曲线</a>
      <a class="tab" href="#">分析</a>
      <a class="tab" href="#">视图</a>
      <a class="tab" href="#">渲染</a>
      <a class="tab" href="#">工具</a>
      <a class="tab" href="#">应用模块</a>
    </nav>

    <section class="ribbon">
      <div class="group">
        <div class="tools">
          <button class="big big-wide"><svg class="i32"><use href="#sketch"/></svg><span>草图</span></button>
          <div class="gallery">
            <button aria-label="轮廓"><svg class="i24"><use href="#profile"/></svg></button>
            <button aria-label="矩形"><svg class="i24"><use href="#rect"/></svg></button>
            <button aria-label="直线"><svg class="i24"><use href="#line"/></svg></button>
            <button aria-label="圆弧"><svg class="i24"><use href="#arc"/></svg></button>
            <button aria-label="圆"><svg class="i24"><use href="#circle"/></svg></button>
            <button aria-label="点"><svg class="i24"><use href="#point"/></svg></button>
          </div>
          <div class="spin">
            <button aria-label="上一行"><svg class="arrow dim"><use href="#up"/></svg></button>
            <button aria-label="下一行"><svg class="arrow"><use href="#down"/></svg></button>
            <button aria-label="全部"><svg class="arrowbar"><use href="#downbar"/></svg></button>
          </div>
        </div>
        <div class="caption"><span>直接草图</span><button aria-label="直接草图选项"><svg class="arrow"><use href="#down"/></svg></button></div>
      </div>
      <span class="vsep"></span>

      <div class="group group-feature">
        <div class="tools">
          <button class="big plane"><span class="plane-icon"><svg class="i32"><use href="#plane"/></svg></span><span class="plane-text">基准平面<svg class="arrow"><use href="#down"/></svg></span></button>
          <button class="big big-narrow"><svg class="i32"><use href="#extrude"/></svg><span>拉伸</span><svg class="arrow"><use href="#down"/></svg></button>
          <button class="big big-narrow"><svg class="i32"><use href="#hole"/></svg><span>孔</span></button>
          <div class="stack">
            <button><svg class="i16"><use href="#pattern"/></svg>阵列特征</button>
            <button><svg class="i16"><use href="#unite"/></svg>合并<svg class="arrow"><use href="#down"/></svg></button>
            <button><svg class="i16"><use href="#shell"/></svg>抽壳</button>
          </div>
          <button class="big"><svg class="i32"><use href="#blend"/></svg><span>边倒圆</span><svg class="arrow"><use href="#down"/></svg></button>
          <div class="stack">
            <button><svg class="i16"><use href="#chamfer"/></svg>倒斜角</button>
            <button><svg class="i16"><use href="#trim"/></svg>修剪体</button>
            <button><svg class="i16"><use href="#draft"/></svg>拔模</button>
          </div>
          <button class="big"><span class="more"><svg class="i16"><use href="#morefeat"/></svg></span><span>更多</span><svg class="arrow"><use href="#down"/></svg></button>
        </div>
        <div class="caption"><span>特征</span><button aria-label="特征选项"><svg class="arrow"><use href="#down"/></svg></button></div>
      </div>
      <span class="vsep"></span>

      <div class="group group-feature">
        <div class="tools">
          <button class="big"><svg class="i32"><use href="#movecube"/></svg><span>移动面</span></button>
          <div class="stack">
            <button><svg class="i16"><use href="#offset"/></svg>偏置区域</button>
            <button><svg class="i16"><use href="#replace"/></svg>替换面</button>
            <button><svg class="i16"><use href="#delface"/></svg>删除面</button>
          </div>
          <button class="big"><span class="more"><svg class="i16"><use href="#sync"/></svg></span><span>更多</span><svg class="arrow"><use href="#down"/></svg></button>
        </div>
        <div class="caption"><span>同步建模</span><button aria-label="同步建模选项"><svg class="arrow"><use href="#down"/></svg></button></div>
      </div>
      <span class="vsep"></span>

      <div class="group">
        <div class="rows">
          <div class="row">
            <button aria-label="属性工具"><svg class="i16"><use href="#attr"/></svg></button>
            <button aria-label="图层"><svg class="i16"><use href="#layers"/></svg></button>
            <button aria-label="图层设置"><svg class="i16"><use href="#layerlist"/></svg></button>
            <span class="minisep"></span>
            <button aria-label="标签"><svg class="i16"><use href="#tag"/></svg></button>
          </div>
          <div class="row">
            <button aria-label="检查部件"><svg class="i16"><use href="#partcheck"/></svg></button>
            <button aria-label="检查制图"><svg class="i16"><use href="#lampcheck"/></svg></button>
            <button aria-label="检查装配"><svg class="i16"><use href="#asmcheck"/></svg></button>
            <span class="minisep"></span>
            <button aria-label="导出"><svg class="i16"><use href="#export"/></svg></button>
          </div>
        </div>
        <div class="caption"><span>标准化工具...</span><button aria-label="标准化工具选项"><svg class="arrow"><use href="#down"/></svg></button></div>
      </div>
      <span class="vsep"></span>

      <div class="group">
        <div class="rows">
          <div class="row">
            <button aria-label="柱齿轮"><svg class="i16"><use href="#gearpair"/></svg></button>
            <button aria-label="锥齿轮"><svg class="i16"><use href="#gearmesh"/></svg></button>
          </div>
          <div class="row">
            <button aria-label="齿轮制图"><svg class="i16"><use href="#rackhand"/></svg></button>
          </div>
        </div>
        <div class="caption"><span>齿...</span><button aria-label="齿轮选项"><svg class="arrow"><use href="#down"/></svg></button></div>
      </div>
      <span class="vsep"></span>

      <div class="group">
        <div class="rows">
          <div class="row">
            <button aria-label="压缩弹簧"><svg class="i16"><use href="#spring"/></svg></button>
            <button aria-label="拉伸弹簧"><svg class="i16"><use href="#tension"/></svg></button>
          </div>
          <div class="row">
            <button aria-label="碟簧"><svg class="i16"><use href="#coil"/></svg></button>
            <span class="minisep"></span>
            <button aria-label="删除弹簧"><svg class="i16"><use href="#springcut"/></svg></button>
          </div>
        </div>
        <div class="caption"><span>弹...</span><button aria-label="弹簧选项"><svg class="arrow"><use href="#down"/></svg></button></div>
      </div>
      <span class="vsep"></span>

      <div class="group">
        <div class="rows">
          <div class="row">
            <button aria-label="加工准备"><svg class="i16"><use href="#mcheck"/></svg></button>
            <button aria-label="加工树"><svg class="i16"><use href="#mtree"/></svg></button>
          </div>
          <div class="row">
            <button aria-label="加工表"><svg class="i16"><use href="#mtable"/></svg></button>
            <button aria-label="坐标系"><svg class="i16"><use href="#csys"/></svg></button>
          </div>
        </div>
        <div class="caption"><span>加...</span><button aria-label="加工选项"><svg class="arrow"><use href="#down"/></svg></button></div>
      </div>
      <span class="vsep"></span>

      <div class="group">
        <div class="rows">
          <div class="row">
            <button aria-label="三角"><svg class="i16"><use href="#triangle"/></svg></button>
            <button aria-label="表格"><svg class="i16"><use href="#tabletri"/></svg></button>
            <button aria-label="包容体"><svg class="i16"><use href="#goldbox"/></svg></button>
          </div>
          <div class="row">
            <button aria-label="注释"><svg class="i16"><use href="#note"/></svg></button>
            <button aria-label="尺寸"><svg class="i16"><use href="#dimbrush"/></svg></button>
            <span class="minisep"></span>
          </div>
        </div>
        <div class="caption caption-left"><span>建模工具</span></div>
      </div>
    </section>

    <section class="selbar">
      <button class="menu-btn"><svg class="i16"><use href="#menu"/></svg><span>菜单(<u>M</u>)</span><svg class="arrow"><use href="#down"/></svg></button>
      <span class="sep"></span>
      <label class="combo">
        <select aria-label="类型过滤器"><option>无选择过滤器</option></select>
        <svg class="arrow-big"><use href="#down"/></svg>
      </label>
      <label class="combo combo-scope">
        <select aria-label="选择范围"><option>整个装配</option></select>
        <svg class="arrow-big"><use href="#down"/></svg>
      </label>
      <div class="picks">
        <button aria-label="选择组件"><svg class="i16"><use href="#selasm"/></svg></button>
        <button aria-label="重置过滤器"><svg class="i16"><use href="#resetfilter"/></svg></button>
        <button aria-label="常规选择过滤器"><svg class="i16"><use href="#filter"/></svg></button>
        <button class="pick-drop" aria-label="过滤器列表"><svg class="arrow"><use href="#down"/></svg></button>
        <button aria-label="恢复选择"><svg class="i16"><use href="#targetundo"/></svg></button>
        <button aria-label="在导航器中查找"><svg class="i16"><use href="#seltree"/></svg></button>
        <button aria-label="允许选择隐藏"><svg class="i16"><use href="#cubetarget"/></svg></button>
        <button aria-label="矩形选择"><svg class="i16"><use href="#selrect"/></svg></button>
        <button class="pick-drop" aria-label="手势列表"><svg class="arrow"><use href="#down"/></svg></button>
      </div>
      <div class="picks">
        <button aria-label="高亮隐藏边"><svg class="i16"><use href="#graybody"/></svg></button>
        <button aria-label="着色"><svg class="i16"><use href="#bluecube"/></svg></button>
        <button class="on" aria-label="启用捕捉点"><svg class="i20"><use href="#snapall"/></svg></button>
        <button class="on" aria-label="端点"><svg class="i16"><use href="#endpt"/></svg></button>
        <button class="on" aria-label="中点"><svg class="i16"><use href="#midpt"/></svg></button>
        <button aria-label="控制点"><svg class="i16"><use href="#ctrlpt"/></svg></button>
        <button class="on" aria-label="极点"><svg class="i16"><use href="#pole"/></svg></button>
        <button class="on" aria-label="定义点"><svg class="i16"><use href="#spline"/></svg></button>
        <button aria-label="交点"><svg class="i16"><use href="#intersect"/></svg></button>
        <button class="on" aria-label="圆弧中心"><svg class="i16"><use href="#center"/></svg></button>
        <button aria-label="象限点"><svg class="i16"><use href="#quadrant"/></svg></button>
        <button class="on" aria-label="现有点"><svg class="i16"><use href="#existing"/></svg></button>
        <button class="on" aria-label="曲线上的点"><svg class="i16"><use href="#oncurve"/></svg></button>
        <button aria-label="面上的点"><svg class="i16"><use href="#onface"/></svg></button>
        <button aria-label="小平面顶点"><svg class="i16"><use href="#facetpt"/></svg></button>
        <button aria-label="栅格点"><svg class="i16"><use href="#gridpt"/></svg></button>
        <span class="sep"></span>
        <button aria-label="缩放"><svg class="i16"><use href="#zoomwin"/></svg></button>
        <button aria-label="平移"><svg class="i16"><use href="#pan"/></svg></button>
      </div>
    </section>

    <main class="main">
      <aside class="resources">
        <button class="settings" aria-label="设置"><svg class="i16"><use href="#gear"/></svg></button>
        <button aria-label="装配导航器"><svg class="i24"><use href="#asmnav"/></svg></button>
        <button aria-label="约束导航器"><svg class="i24"><use href="#constraint"/></svg></button>
        <button class="current" aria-label="部件导航器"><svg class="i24"><use href="#partnav"/></svg></button>
        <button aria-label="重用库"><svg class="i24"><use href="#books"/></svg></button>
        <button class="apart" aria-label="HD3D 工具"><svg class="i24"><use href="#info"/></svg></button>
        <button class="apart" aria-label="Web 浏览器"><svg class="i24"><use href="#web"/></svg></button>
        <button class="apart" aria-label="历史记录"><svg class="i24"><use href="#clock"/></svg></button>
        <button aria-label="系统材料"><svg class="i24"><use href="#rainbow"/></svg></button>
        <button aria-label="加工向导"><svg class="i24"><use href="#visual"/></svg></button>
        <button aria-label="角色"><svg class="i24"><use href="#robot"/></svg></button>
      </aside>

      <section class="navigator">
        <div class="nav-title"><span>部件导航器</span><button class="maximize" aria-label="最大化"></button></div>
        <div class="tree">
          <div class="tree-head">名称 <svg class="sort"><use href="#up"/></svg></div>
          <ul class="tree-body">
            <li class="root first"><button class="expander" aria-label="展开">+</button><svg class="i16"><use href="#views"/></svg><span>模型视图</span></li>
            <li class="root"><button class="expander" aria-label="展开">+</button><svg class="i16"><use href="#tick"/></svg><svg class="i16"><use href="#camera"/></svg><span>摄像机</span></li>
            <li class="root"><button class="expander" aria-label="展开">+</button><svg class="i16"><use href="#clock"/></svg><svg class="i16"><use href="#sheets"/></svg><span>图纸</span></li>
            <li class="root"><button class="expander" aria-label="展开">+</button><svg class="i16"><use href="#folder"/></svg><span>组</span></li>
            <li class="root last"><button class="expander" aria-label="折叠">−</button><svg class="i16"><use href="#folder"/></svg><span>模型历史记录</span></li>
            <li class="child"><input type="checkbox" id="datum" checked><svg class="i16"><use href="#csys"/></svg><label class="muted" for="datum">基准坐标系 (0)</label></li>
            <li class="child last"><input type="checkbox" id="solid" checked><svg class="i16"><use href="#body"/></svg><label class="strong" for="solid">体 (10)</label></li>
          </ul>
        </div>
      </section>

      <section class="graphics">
        <div class="doc-tabs">
          <div class="doc-tab"><svg class="i16"><use href="#part"/></svg><span>model.prt</span><svg class="i12"><use href="#modified"/></svg><button aria-label="关闭"><svg class="i10"><use href="#close"/></svg></button></div>
        </div>
        <div class="canvas">
          <svg class="bracket" viewBox="0 0 900 690" stroke="#2a2e2e" stroke-width="2.500" stroke-linejoin="round">
            <path d="M262 82L732 205 655 389 290 296Q272 290 270 272z" fill="#868f8c"/>
            <path d="M262 82L270 272 122 408z" fill="#b5c6c5"/>
            <path d="M290 296L655 389 595 535 558 570 130 457z" fill="#fff"/>
            <path d="M270 272Q274 292 290 296L130 457Q116 450 116 430 118 415 122 408z" fill="url(#gFace)"/>
            <path d="M198 66L262 82 122 408Q110 438 125 456L42 435z" fill="#fff"/>
            <path d="M732 205L798 221 640 592 558 570Q585 555 595 532L655 389z" fill="#fff"/>
            <path d="M595 532L558 570" fill="none" stroke-width="2"/>
            <path d="M235 30L831 186 798 221 198 66z" fill="#fff"/>
            <path d="M831 186L845 457 642 654 640 592 798 221z" fill="#b5c6c5"/>
            <path d="M42 435L640 592 642 654 45 497z" fill="#868f8c"/>
            <ellipse cx="373" cy="171" rx="32" ry="37" transform="rotate(-35 373 171)" fill="url(#gHoleWall)"/>
            <path d="M376 138Q397 145 402 168 383 158 376 138z" fill="#76807e"/>
            <ellipse cx="629" cy="238" rx="32" ry="37" transform="rotate(-35 629 238)" fill="url(#gHoleWall)"/>
            <path d="M632 206Q653 213 658 236 639 226 632 206z" fill="#76807e"/>
            <ellipse cx="400" cy="454" rx="40" ry="22" fill="url(#gBore)"/>
          </svg>
        </div>
      </section>
    </main>
  </body>
</html>
```
FILE: styles.css
```css
* {
  box-sizing: border-box;
  margin: 0;
  padding: 0;
}
body {
  display: flex;
  flex-direction: column;
  height: 100vh;
  overflow: hidden;
  background: white;
  color: #1a1a1a;
  font-family: "Open Sans", "Noto Sans CJK SC", sans-serif;
  font-size: 14px;
  line-height: 20px;
  white-space: nowrap;
}
button {
  display: flex;
  align-items: center;
  justify-content: center;
  flex: none;
  border: none;
  background: none;
  color: inherit;
  font: inherit;
}
a {
  color: inherit;
  text-decoration: none;
}
svg {
  flex: none;
  display: block;
}
.sprite {
  position: absolute;
  width: 0;
  height: 0;
}
.i10 { width: 10px; height: 10px; }
.i12 { width: 12px; height: 12px; }
.i16 { width: 16px; height: 16px; }
.i20 { width: 20px; height: 16px; }
.i24 { width: 24px; height: 24px; }
.i32 { width: 32px; height: 32px; }
.arrow { width: 8px; height: 4px; }
.arrowbar { width: 9px; height: 8px; }
.arrow-big { width: 10px; height: 5px; }
.dim { fill: #aaa; }
.sep {
  flex: none;
  width: 1px;
  height: 24px;
  margin: 0 3px;
  background: #dadada;
}

/* title bar */
.titlebar {
  display: flex;
  align-items: center;
  flex: none;
  height: 30px;
  padding-left: 4px;
}
.logo {
  width: 39px;
  color: #8599a9;
  font-size: 24px;
  font-weight: bold;
}
.tb {
  width: 23px;
  height: 24px;
}
.tb-wide {
  width: 25px;
}
.drop {
  width: 14px;
  height: 24px;
}
.tb-text {
  gap: 4px;
  padding-left: 2px;
}
.tb-text + .tb-text {
  margin-left: 4px;
}
.app-name {
  margin-left: auto;
  font-size: 16px;
}

/* ribbon tabs */
.tabs {
  display: flex;
  flex: none;
  height: 32px;
  background: #dcdcdc;
  font-size: 16px;
  line-height: 32px;
}
.file-tab {
  width: 91px;
  margin-right: 2px;
  background: #55a1ba;
  color: white;
}
.tab {
  padding: 0 13px;
}
.tab.active {
  border-top: 1px solid #999;
  background: white;
  color: #006487;
}

/* ribbon */
.ribbon {
  display: flex;
  flex: none;
  height: 106px;
  border-bottom: 1px solid #d4d4d4;
}
.vsep {
  flex: none;
  width: 1px;
  margin: 5px 0 4px;
  background: #dadada;
}
.group {
  display: flex;
  flex-direction: column;
  flex: none;
  padding-top: 2px;
}
.tools {
  display: flex;
  height: 82px;
}
.group-feature .tools {
  padding-left: 9px;
}
.big {
  flex-direction: column;
  justify-content: flex-start;
  width: 46px;
  padding-top: 3px;
}
.big span {
  margin-top: 5px;
}
.big > .arrow {
  margin-top: 5px;
}
.big-wide {
  width: 57px;
}
.big-narrow {
  width: 40px;
}
.plane {
  width: 63px;
  padding: 0;
  gap: 1px;
}
.big .plane-icon,
.big .plane-text {
  display: flex;
  flex-direction: column;
  align-items: center;
  justify-content: center;
  width: 100%;
  height: 38px;
  margin: 0;
  background: #afd6e0;
}
.big .plane-text {
  justify-content: flex-start;
  gap: 5px;
  height: 43px;
  padding-top: 1px;
}
.big .more {
  display: flex;
  align-items: center;
  justify-content: center;
  width: 38px;
  height: 35px;
  margin: -1px 0 -2px;
  border: 1px solid #dadada;
  border-radius: 3px;
}
.big .more + span {
  margin-top: 5px;
}
.gallery {
  display: grid;
  grid-template-columns: repeat(3, 1fr);
  width: 117px;
  height: 78px;
  margin-top: 3px;
  border: 1px solid #dadada;
}
.spin {
  display: grid;
  grid-template-rows: repeat(3, 26px);
  width: 20px;
  margin: 3px 5px 0 0;
}
.stack {
  display: grid;
  grid-template-rows: repeat(3, 26px);
  padding: 0 7px;
}
.stack button {
  justify-content: flex-start;
  gap: 4px;
}
.stack .arrow {
  margin-left: 3px;
}
.caption {
  display: flex;
  height: 22px;
  padding: 1px 3px 0 1px;
  color: #006487;
}
.caption span {
  flex: 1;
  text-align: center;
}
.caption button {
  width: 18px;
  color: #1a1a1a;
}
.caption-left span {
  text-align: left;
}
.rows {
  height: 82px;
  padding: 4px 1px 0 3px;
}
.row {
  display: flex;
  align-items: center;
  height: 31px;
}
.row button {
  width: 24px;
  height: 24px;
}
.minisep {
  width: 1px;
  height: 18px;
  margin: 0 1px;
  background: #dadada;
}

/* selection bar */
.selbar {
  display: flex;
  align-items: center;
  flex: none;
  height: 36px;
  border-bottom: 1px solid #8c9499;
}
.menu-btn {
  gap: 5px;
  margin: 0 3px 0 10px;
}
.combo {
  display: grid;
  align-items: center;
  width: 167px;
  margin-left: 9px;
}
.combo-scope {
  width: 176px;
}
.combo select,
.combo svg {
  grid-area: 1 / 1;
}
.combo svg {
  justify-self: end;
  margin-right: 6px;
  pointer-events: none;
}
.combo select {
  appearance: none;
  height: 24px;
  padding-left: 2px;
  border: 1px solid #aaa;
  border-radius: 0;
  background: white;
  color: inherit;
  font: inherit;
}
.picks {
  display: flex;
  align-items: center;
  gap: 1px;
  margin-left: 5px;
}
.picks button {
  width: 24px;
  height: 22px;
}
.picks .pick-drop {
  width: 10px;
}
.picks .on {
  border: 1px solid #a9d2dd;
  background: #cde5ea;
}
.picks .sep {
  margin: 0 5px;
}

/* work area */
.main {
  display: flex;
  flex: 1;
  min-height: 0;
}
.resources {
  flex: none;
  width: 32px;
  border-right: 1px solid #a5a5a5;
  background: #dcdcdc;
}
.resources button {
  width: 32px;
  height: 42px;
  padding-left: 3px;
}
.resources .settings {
  height: 26px;
  margin-bottom: 16px;
  padding: 0 2px 0 0;
}
.resources .current {
  width: 30px;
  height: 46px;
  margin: -2px 0 -2px 2px;
  padding-left: 2px;
  border: 1px solid #a5a5a5;
  border-right: none;
  background: white;
}
.resources .apart {
  margin-top: 12px;
}
.navigator {
  display: flex;
  flex-direction: column;
  flex: none;
  width: 191px;
  padding: 0 9px 0 6px;
  border-right: 1px solid #b5b5b5;
  font-size: 15px;
}
.nav-title {
  display: flex;
  align-items: center;
  justify-content: space-between;
  height: 31px;
  padding: 1px 7px 0 4px;
}
.maximize {
  width: 14px;
  height: 13px;
  margin-top: 3px;
  border: 1px solid #111;
}
.tree {
  display: flex;
  flex-direction: column;
  flex: 1;
  min-height: 0;
  border: 1px solid #d8d8d8;
  border-bottom: none;
  padding: 1px 1px 0;
}
.tree-head {
  display: flex;
  align-items: center;
  gap: 17px;
  flex: none;
  height: 24px;
  padding-left: 6px;
  border-bottom: 1px solid #ccc;
  background: #f0f0f0;
}
.sort {
  width: 12px;
  height: 6px;
}
.tree-body {
  flex: 1;
  overflow: hidden;
  list-style: none;
  background: repeating-linear-gradient(white 0 23px, #e4e4e4 23px 24px, #fafafa 24px 47px, #e4e4e4 47px 48px);
}
.tree-body li {
  display: flex;
  align-items: center;
  position: relative;
  height: 24px;
  padding-left: 4px;
}
.tree-body li > span {
  margin-left: 4px;
}
.expander {
  position: relative;
  width: 11px;
  height: 11px;
  margin-right: 4px;
  border: 1px solid #ccc;
  background: white;
  color: #111;
  font-size: 14px;
  line-height: 9px;
}
.tree-body .child {
  padding-left: 40px;
}
/* dotted branch lines */
.tree-body li::before {
  content: "";
  position: absolute;
  left: 9px;
  top: 0;
  width: 9px;
  height: 12px;
  border-left: 1px dotted #999;
  border-bottom: 1px dotted #999;
}
.tree-body li:not(.last)::after {
  content: "";
  position: absolute;
  left: 9px;
  top: 12px;
  height: 12px;
  border-left: 1px dotted #999;
}
.tree-body .first::before {
  border-left: none;
}
.tree-body .child::before,
.tree-body .child:not(.last)::after {
  left: 28px;
}
.child input {
  flex: none;
  display: grid;
  appearance: none;
  width: 12px;
  height: 12px;
  margin-right: 2px;
  border: 1px solid #111;
  background: white;
}
.child input:checked::before {
  content: "✔";
  place-self: center;
  color: #16b52a;
  font-family: "DejaVu Sans", sans-serif;
  font-size: 13px;
  line-height: 10px;
}
.child label {
  margin-left: 3px;
}
.muted {
  color: #999;
}
.strong {
  font-weight: bold;
}

.graphics {
  display: flex;
  flex-direction: column;
  flex: 1;
  min-width: 0;
}
.doc-tabs {
  display: flex;
  flex: none;
  height: 26px;
  border-bottom: 2px solid #55a1ba;
}
.doc-tab {
  display: flex;
  align-items: center;
  gap: 5px;
  padding: 0 5px;
  background: #55a1ba;
  color: white;
  font-size: 16px;
}
.canvas {
  position: relative;
  flex: 1;
  overflow: hidden;
  background: linear-gradient(#909496, #5c5e64 60%, #3b3e41);
}
.bracket {
  position: absolute;
  left: 307px;
  top: 125px;
  width: 300px;
  height: 230px;
}
```
